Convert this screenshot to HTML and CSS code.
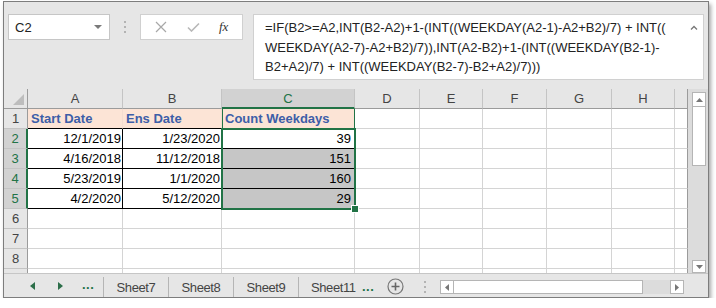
FILE: index.html
```html
<!DOCTYPE html>
<html>
<head>
<meta charset="utf-8">
<link rel="stylesheet" href="styles.css">
</head>
<body>
<div class="window">
  <div class="toolbar">
    <div class="namebox"><span>C2</span><span class="dd"></span></div>
    <div class="grip"><i></i><i></i><i></i></div>
    <div class="fxbox">
      <svg class="ic-x" width="12" height="12" viewBox="0 0 12 12"><path d="M1 1L11 11M11 1L1 11" stroke="#a8a8a8" stroke-width="1.2" fill="none"/></svg>
      <svg class="ic-ok" width="13" height="10" viewBox="0 0 13 10"><path d="M1 5.5L4.5 9L12 1.5" stroke="#b8b8b8" stroke-width="1.6" fill="none"/></svg>
      <span class="fx">fx</span>
    </div>
    <div class="formula">
      <div class="ftext">=IF(B2&gt;=A2,INT(B2-A2)+1-(INT((WEEKDAY(A2-1)-A2+B2)/7) + INT((<br>WEEKDAY(A2-7)-A2+B2)/7)),INT(A2-B2)+1-(INT((WEEKDAY(B2-1)-<br>B2+A2)/7) + INT((WEEKDAY(B2-7)-B2+A2)/7)))</div>
      <svg class="caret" width="8" height="5" viewBox="0 0 8 5"><path d="M1 4.5L4 1.5L7 4.5" stroke="#777" stroke-width="1.3" fill="none"/></svg>
    </div>
  </div>

  <div class="body">
    <div class="sheet">
      <div class="cell corner"><span class="tri"></span></div>
      <div class="cell ch">A</div>
      <div class="cell ch">B</div>
      <div class="cell ch sel">C</div>
      <div class="cell ch">D</div>
      <div class="cell ch">E</div>
      <div class="cell ch">F</div>
      <div class="cell ch">G</div>
      <div class="cell ch">H</div>
      <div class="cell ch last"></div>

      <div class="cell rh">1</div>
      <div class="cell hd">Start Date</div>
      <div class="cell hd">Ens Date</div>
      <div class="cell hd c1">Count Weekdays</div>
      <div class="cell"></div><div class="cell"></div><div class="cell"></div><div class="cell"></div><div class="cell"></div><div class="cell last"></div>

      <div class="cell rh sel">2</div>
      <div class="cell d">12/1/2019</div>
      <div class="cell d">1/23/2020</div>
      <div class="cell d cv">39</div>
      <div class="cell"></div><div class="cell"></div><div class="cell"></div><div class="cell"></div><div class="cell"></div><div class="cell last"></div>

      <div class="cell rh sel">3</div>
      <div class="cell d">4/16/2018</div>
      <div class="cell d">11/12/2018</div>
      <div class="cell d cv shade">151</div>
      <div class="cell"></div><div class="cell"></div><div class="cell"></div><div class="cell"></div><div class="cell"></div><div class="cell last"></div>

      <div class="cell rh sel">4</div>
      <div class="cell d">5/23/2019</div>
      <div class="cell d">1/1/2020</div>
      <div class="cell d cv shade">160</div>
      <div class="cell"></div><div class="cell"></div><div class="cell"></div><div class="cell"></div><div class="cell"></div><div class="cell last"></div>

      <div class="cell rh sel">5</div>
      <div class="cell d">4/2/2020</div>
      <div class="cell d">5/12/2020</div>
      <div class="cell d cv shade">29</div>
      <div class="cell"></div><div class="cell"></div><div class="cell"></div><div class="cell"></div><div class="cell"></div><div class="cell last"></div>

      <div class="cell rh">6</div>
      <div class="cell"></div><div class="cell"></div><div class="cell"></div><div class="cell"></div><div class="cell"></div><div class="cell"></div><div class="cell"></div><div class="cell"></div><div class="cell last"></div>

      <div class="cell rh">7</div>
      <div class="cell"></div><div class="cell"></div><div class="cell"></div><div class="cell"></div><div class="cell"></div><div class="cell"></div><div class="cell"></div><div class="cell"></div><div class="cell last"></div>

      <div class="cell rh">8</div>
      <div class="cell"></div><div class="cell"></div><div class="cell"></div><div class="cell"></div><div class="cell"></div><div class="cell"></div><div class="cell"></div><div class="cell"></div><div class="cell last"></div>

      <div class="cell rh part"></div>
      <div class="cell part"></div><div class="cell part"></div><div class="cell part"></div><div class="cell part"></div><div class="cell part"></div><div class="cell part"></div><div class="cell part"></div><div class="cell part"></div><div class="cell part last"></div>

      <div class="selbox"><span class="handle"></span></div>
    </div>
    <div class="vscroll">
      <div class="sbtn up"><svg width="7" height="4" viewBox="0 0 7 4"><path d="M0 4L3.5 0L7 4Z" fill="#777"/></svg></div>
      <div class="vthumb"></div>
      <div class="vtrough"></div>
      <div class="sbtn down"><svg width="7" height="4" viewBox="0 0 7 4"><path d="M0 0L3.5 4L7 0Z" fill="#777"/></svg></div>
    </div>
  </div>

  <div class="tabbar">
    <div class="nav">
      <svg class="arr" width="5" height="8" viewBox="0 0 5 8"><path d="M5 0L0 4L5 8Z" fill="#2c6e49"/></svg>
      <svg class="arr r" width="5" height="8" viewBox="0 0 5 8"><path d="M0 0L5 4L0 8Z" fill="#2c6e49"/></svg>
      <span class="more">...</span>
    </div>
    <div class="tab">Sheet7</div>
    <div class="tab">Sheet8</div>
    <div class="tab">Sheet9</div>
    <div class="tab wide">Sheet11</div>
    <span class="more more2">...</span>
    <svg class="plus" width="17" height="17" viewBox="0 0 17 17"><circle cx="8.5" cy="8.5" r="7.5" stroke="#777" stroke-width="1.2" fill="none"/><path d="M8.5 4.5V12.5M4.5 8.5H12.5" stroke="#666" stroke-width="1.6"/></svg>
    <div class="grip2"><i></i><i></i><i></i></div>
    <div class="hscroll">
      <div class="hbtn"><svg width="4" height="7" viewBox="0 0 4 7"><path d="M4 0L0 3.5L4 7Z" fill="#777"/></svg></div>
      <div class="hthumb"></div>
      <div class="htrough"></div>
      <div class="hbtn"><svg width="4" height="7" viewBox="0 0 4 7"><path d="M0 0L4 3.5L0 7Z" fill="#777"/></svg></div>
    </div>
  </div>
</div>
</body>
</html>
```

FILE: styles.css
```css
* { box-sizing: border-box; }
html, body { margin: 0; padding: 0; background: #fff; }
body { font-family: "Liberation Sans", Arial, sans-serif; }

.window {
  margin: 1px 0 0 3px;
  width: 706px;
  height: 297px;
  border: 1px solid #7d7d7d;
  background: #e6e6e6;
  box-shadow: 2px 3px 4px rgba(0,0,0,0.35);
  display: flex;
  flex-direction: column;
}

/* toolbar */
.toolbar {
  height: 87px;
  display: flex;
  align-items: flex-start;
  padding: 12px 0 0 4px;
}
.namebox {
  width: 102px;
  height: 26px;
  background: #fff;
  border: 1px solid #c6c6c6;
  display: flex;
  align-items: center;
  justify-content: space-between;
  padding: 0 7px 0 6px;
  font-size: 13px;
  color: #222;
}
.dd {
  width: 0; height: 0;
  border-left: 4px solid transparent;
  border-right: 4px solid transparent;
  border-top: 4px solid #7a7a7a;
}
.grip {
  width: 30px;
  height: 26px;
  display: flex;
  flex-direction: column;
  align-items: center;
  justify-content: center;
  gap: 3px;
}
.grip i, .grip2 i { display: block; width: 2px; height: 2px; background: #b3b3b3; }
.fxbox {
  width: 103px;
  height: 26px;
  background: #fff;
  border: 1px solid #d0d0d0;
  display: flex;
  align-items: center;
  padding-left: 14px;
}
.ic-ok { margin-left: 20px; }
.fx {
  margin-left: 19px;
  font-family: "Liberation Serif", serif;
  font-style: italic;
  font-size: 13px;
  color: #333;
}
.formula {
  margin-left: 10px;
  width: 451px;
  height: 66px;
  background: #fff;
  border: 1px solid #d0d0d0;
  display: flex;
  justify-content: space-between;
  padding: 3px 5px 0 11px;
}
.ftext {
  font-size: 13px;
  line-height: 19.5px;
  color: #222;
  white-space: nowrap;
}
.caret { margin-top: 7px; }

/* body */
.body {
  height: 184px;
  display: flex;
}
.sheet {
  position: relative;
  width: 684px;
  display: grid;
  grid-template-columns: 24px 95px 99px 133px 65px 63px 64px 65px 63px 13px;
  grid-template-rows: repeat(9, 20px) 4px;
  background: #fff;
}
.cell {
  border-right: 1px solid #d4d4d4;
  border-bottom: 1px solid #d4d4d4;
  display: flex;
  align-items: center;
  padding: 0 2px 0 3px;
  font-size: 13px;
  color: #000;
  white-space: nowrap;
  overflow: hidden;
}
.cell.last { border-right: 1px solid #9b9b9b; }
.cell.part { border-bottom: none; }
.corner {
  background: #e6e6e6;
  border-right: 1px solid #9b9b9b;
  border-bottom: 1px solid #9b9b9b;
  justify-content: flex-end;
  align-items: flex-end;
  padding: 0 3px 3px 0;
}
.tri {
  width: 11px;
  height: 11px;
  background: #bdbdbd;
  clip-path: polygon(100% 0, 100% 100%, 0 100%);
}
.ch {
  background: #e6e6e6;
  border-right-color: #c4c4c4;
  border-bottom: 1px solid #9b9b9b;
  justify-content: center;
  font-size: 13px;
  color: #444;
  padding: 0;
}
.ch.last { border-right: 1px solid #9b9b9b; }
.ch.sel {
  background: #d2d2d2;
  color: #217346;
  border-bottom: 2px solid #217346;
}
.rh {
  background: #e6e6e6;
  border-right: 1px solid #9b9b9b;
  border-bottom-color: #c4c4c4;
  justify-content: center;
  font-size: 13px;
  color: #444;
  padding: 0;
}
.rh.sel {
  background: #d2d2d2;
  color: #217346;
  border-right: 2px solid #217346;
}
.hd {
  background: #fce4d6;
  color: #3d5ea8;
  font-weight: bold;
  font-size: 13px;
  border-right-color: #f3ddd0;
  border-bottom: 1px solid #000;
  padding-left: 3px;
}
.hd.c1 {
  border-right-color: #217346;
  box-shadow: inset 1px 0 0 #217346;
}
.d {
  justify-content: flex-end;
  border-right: 1px solid #000;
  border-bottom: 1px solid #000;
  padding-right: 1px;
}
.cv { padding-right: 3px; }
.shade { background: #c6c6c6; }
.selbox {
  position: absolute;
  left: 217px;
  top: 39px;
  width: 135px;
  height: 82px;
  border: 2px solid #217346;
  pointer-events: none;
}
.handle {
  position: absolute;
  right: -4px;
  bottom: -4px;
  width: 6px;
  height: 6px;
  background: #217346;
  outline: 1px solid #fff;
}

/* vertical scrollbar */
.vscroll {
  width: 20px;
  background: #dcdcdc;
  display: flex;
  flex-direction: column;
  padding: 3px 2px 0 4px;
}
.sbtn {
  background: #fff;
  border: 1px solid #b5b5b5;
  display: flex;
  align-items: center;
  justify-content: center;
}
.sbtn.up { height: 15px; }
.sbtn.down { height: 13px; }
.vthumb {
  height: 59px;
  background: #fff;
  border: 1px solid #b5b5b5;
  border-top: none;
}
.vtrough { flex: 1; }

/* tab bar */
.tabbar {
  height: 24px;
  border-top: 1px solid #c6c6c6;
  display: flex;
  align-items: stretch;
  font-size: 13px;
  color: #444;
}
.nav {
  width: 99px;
  display: flex;
  align-items: center;
  padding-left: 26px;
}
.arr.r { margin-left: 23px; }
.more {
  color: #217346;
  font-weight: bold;
  font-size: 13px;
  letter-spacing: 0.5px;
  margin-left: 19px;
  margin-top: -2px;
}
.tab {
  width: 65px;
  margin-top: 3px;
  border-left: 1px solid #b5b5b5;
  display: flex;
  align-items: center;
  justify-content: center;
  letter-spacing: -0.4px;
}
.tab.wide {
  width: 64px;
  justify-content: flex-start;
  padding-left: 12px;
}
.more2 {
  margin-left: 0;
  align-self: center;
  margin-top: 1px;
}
.plus {
  align-self: center;
  margin-left: 13px;
  margin-top: 2px;
}
.grip2 {
  width: 2px;
  margin-left: 20px;
  display: flex;
  flex-direction: column;
  justify-content: center;
  gap: 3px;
  padding-top: 2px;
}
.hscroll {
  margin-left: 14px;
  margin-top: 6px;
  width: 244px;
  height: 14px;
  display: flex;
}
.hbtn {
  width: 14px;
  height: 14px;
  background: #fff;
  border: 1px solid #b5b5b5;
  display: flex;
  align-items: center;
  justify-content: center;
}
.hthumb {
  width: 189px;
  background: #fff;
  border: 1px solid #b5b5b5;
  border-left: none;
}
.htrough {
  flex: 1;
  background: #dcdcdc;
}
```
